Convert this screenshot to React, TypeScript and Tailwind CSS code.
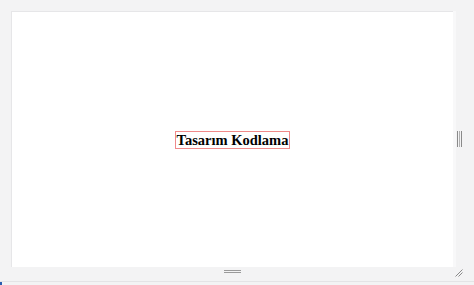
export default function App() {
    return (
        <div className="relative flex h-[285px] w-[474px] flex-col overflow-hidden bg-[#f3f3f4]">
            <div className="flex flex-1 pl-[11px] pt-[11px]">
                <div className="flex flex-1 items-center justify-center border-l border-t border-[#e6e6e8] bg-white">
                    <span
                        className="border border-[#f08a8a] px-[1px] text-[14.5px] font-bold leading-[16px] text-black"
                        style={{ fontFamily: '"Liberation Serif", "Times New Roman", serif' }}
                    >
                        Tasarım Kodlama
                    </span>
                </div>
                <div className="flex w-[21px] items-center border-l-[3px] border-[#f8f8f9] pl-[1px]">
                    <div className="flex h-[16px] gap-[1px]">
                        <div className="w-[1px] bg-[#8a8a8a]" />
                        <div className="w-[1px] bg-[#b0b0b0]" />
                        <div className="w-[1px] bg-[#8a8a8a]" />
                    </div>
                </div>
            </div>
            <div className="relative flex h-[18px] items-start justify-center pl-[11px] pr-[21px]">
                <div className="mt-[3px] flex w-[17px] flex-col gap-[1px]">
                    <div className="h-[1px] bg-[#9a9a9a]" />
                    <div className="h-[1px] bg-[#9a9a9a]" />
                </div>
                <svg className="absolute right-[11px] top-[2px]" width="8" height="8" viewBox="0 0 8 8" fill="none" stroke="#8a8a8a" strokeWidth="1">
                    <line x1="0.5" y1="7.5" x2="7.5" y2="0.5" />
                    <line x1="3.5" y1="7.5" x2="7.5" y2="3.5" />
                </svg>
            </div>
            <div className="absolute bottom-[3px] left-0 h-[1px] w-full bg-[#e4e4e6]" />
            <div className="absolute bottom-0 left-0 h-[3px] w-[2px] bg-[#2a5db0]" />
        </div>
    );
}
